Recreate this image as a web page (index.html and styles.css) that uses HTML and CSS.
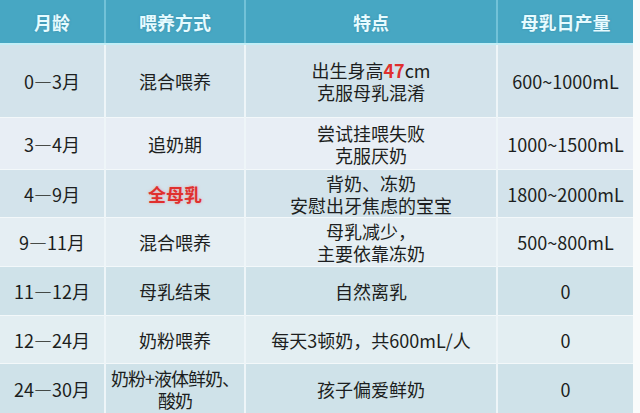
FILE: index.html
```html
<!DOCTYPE html>
<html lang="zh">
<head>
<meta charset="utf-8">
<link rel="stylesheet" href="styles.css">
</head>
<body>
<table class="feed">
  <colgroup>
    <col class="c1"><col class="c2"><col class="c3"><col class="c4">
  </colgroup>
  <thead>
    <tr><th>月龄</th><th>喂养方式</th><th>特点</th><th>母乳日产量</th></tr>
  </thead>
  <tbody>
    <tr class="r1 odd"><td>0—3月</td><td>混合喂养</td><td>出生身高<b class="red">47</b>cm<br>克服母乳混淆</td><td>600~1000mL</td></tr>
    <tr class="r2 even"><td>3—4月</td><td>追奶期</td><td>尝试挂喂失败<br>克服厌奶</td><td>1000~1500mL</td></tr>
    <tr class="r3 odd"><td>4—9月</td><td><b class="red glow">全母乳</b></td><td>背奶、冻奶<br>安慰出牙焦虑的宝宝</td><td>1800~2000mL</td></tr>
    <tr class="r4 even"><td>9—11月</td><td>混合喂养</td><td>母乳减少，<br>主要依靠冻奶</td><td>500~800mL</td></tr>
    <tr class="r5 odd"><td>11—12月</td><td>母乳结束</td><td>自然离乳</td><td>0</td></tr>
    <tr class="r6 even"><td>12—24月</td><td>奶粉喂养</td><td>每天3顿奶，共600mL/人</td><td>0</td></tr>
    <tr class="r7 odd"><td>24—30月</td><td class="tight">奶粉+液体鲜奶、<br>酸奶</td><td>孩子偏爱鲜奶</td><td>0</td></tr>
  </tbody>
</table>
</body>
</html>
```
FILE: styles.css
```css
html, body {
  margin: 0;
  padding: 0;
  background: #f9fbfb;
  overflow: hidden;
}
body {
  width: 640px;
  height: 413px;
  font-family: "Noto Sans CJK SC", "Noto Sans", sans-serif;
}
.feed {
  border-collapse: collapse;
  table-layout: fixed;
  width: 633px;
  font-size: 18px;
  color: #1c1e20;
}
.c1 { width: 105px; }
.c2 { width: 140px; }
.c3 { width: 252px; }
.c4 { width: 136px; }

.feed th {
  background: #47a7c3;
  color: #e6fbff;
  font-weight: bold;
  height: 43px;
  padding: 0;
  border-left: 2px solid #72c2d8;
  border-bottom: 2px solid #c3eef6;
  text-shadow: 0 0 2px rgba(40, 110, 140, 0.5);
}
.feed th:first-child { border-left: none; }

.feed td {
  padding: 0 2px;
  text-align: center;
  vertical-align: middle;
  line-height: 22px;
  border-left: 2px solid #eef5f8;
  border-top: 1px solid #f3f8fa;
}
.feed td:first-child { border-left: none; }

.odd td { background: #d3e3eb; }
.even td { background: #e8eef5; }
.r4 td { background: #e5eef3; }
.r6 td { background: #e3eef2; }
.r5 td, .r7 td { background: #cfe2e9; }

.r1 td { height: 72px; }
.r2 td { height: 51px; }
.r3 td { height: 47px; }
.r4 td { height: 48px; }
.r5 td { height: 48px; }
.r6 td { height: 47px; }
.r7 td { height: 50px; }

.red {
  color: #e0302e;
  font-weight: bold;
}
.glow {
  text-shadow: 0 0 3px rgba(240, 120, 120, 0.6);
}
.tight {
  padding: 0;
  white-space: nowrap;
  letter-spacing: -1px;
}
```
